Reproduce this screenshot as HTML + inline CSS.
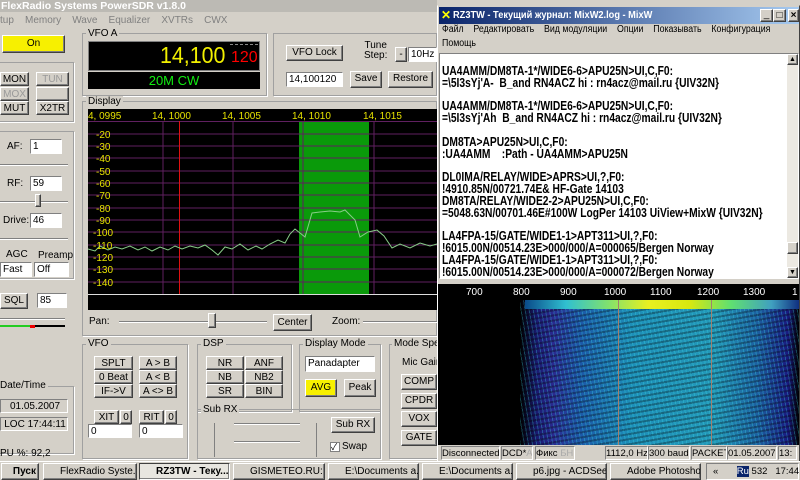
<!DOCTYPE html>
<html><head><meta charset="utf-8"><style>
*{box-sizing:border-box;margin:0;padding:0}
body{width:800px;height:480px;overflow:hidden;background:#d4d0c8;font-family:"Liberation Sans","Noto Sans CJK SC",sans-serif;font-size:10px;color:#000;position:relative;white-space:nowrap}
.a{position:absolute}
.btn{position:absolute;background:#d4d0c8;border:1px solid;border-color:#fff #404040 #404040 #fff;box-shadow:inset -1px -1px #808080;text-align:center;font-size:10px;line-height:13px;overflow:hidden}
.grp{position:absolute;border:1px solid #a0a0a0;box-shadow:1px 1px #fff}
.gl{position:absolute;background:#d4d0c8;padding:0 2px;font-size:10px;line-height:12px}
.inp{position:absolute;background:#fff;border:1px solid;border-color:#808080 #fff #fff #808080;font-size:10px;padding-left:2px;line-height:13px;overflow:hidden}
.txt{font-family:"Liberation Sans",sans-serif;font-weight:bold;font-size:12.5px;line-height:12px;color:#000;transform:scaleX(0.82);transform-origin:0 0}
</style></head><body>
<div class="a" style="left:0;top:0;width:437px;height:12px;background:#bcbab4;color:#fff;font-weight:bold;font-size:10.5px;line-height:12px;padding-left:1px">FlexRadio Systems PowerSDR v1.8.0</div>
<div class="a" style="left:0;top:13px;width:437px;height:15px;color:#808080;font-size:10px;line-height:15px">tup&nbsp;&nbsp;&nbsp;&nbsp;Memory&nbsp;&nbsp;&nbsp;&nbsp;Wave&nbsp;&nbsp;&nbsp;&nbsp;Equalizer&nbsp;&nbsp;&nbsp;&nbsp;XVTRs&nbsp;&nbsp;&nbsp;&nbsp;CWX</div>
<div class="btn" style="left:2px;top:35px;width:63px;height:18px;background:#f7f000;line-height:16px">On</div>
<div class="grp" style="left:-2px;top:62px;width:76px;height:60px"></div>
<div class="btn" style="left:0;top:72px;width:29px;height:14px">MON</div>
<div class="btn" style="left:36px;top:72px;width:33px;height:14px;color:#999">TUN</div>
<div class="btn" style="left:0;top:87px;width:29px;height:14px;color:#999">MOX</div>
<div class="btn" style="left:36px;top:87px;width:33px;height:14px"></div>
<div class="btn" style="left:0;top:101px;width:29px;height:14px">MUT</div>
<div class="btn" style="left:36px;top:101px;width:33px;height:14px">X2TR</div>
<div class="grp" style="left:-2px;top:131px;width:76px;height:148px"></div>
<div class="a" style="left:7px;top:141px">AF:</div><div class="inp" style="left:30px;top:139px;width:32px;height:15px">1</div>
<div class="a" style="left:0;top:164px;width:68px;height:2px;border-top:1px solid #808080;border-bottom:1px solid #fff"></div>
<div class="a" style="left:7px;top:178px">RF:</div><div class="inp" style="left:30px;top:176px;width:32px;height:15px">59</div>
<div class="a" style="left:0;top:201px;width:68px;height:2px;border-top:1px solid #808080;border-bottom:1px solid #fff"></div>
<div class="btn" style="left:35px;top:194px;width:6px;height:13px"></div>
<div class="a" style="left:3px;top:215px">Drive:</div><div class="inp" style="left:30px;top:213px;width:32px;height:15px">46</div>
<div class="a" style="left:0;top:238px;width:68px;height:2px;border-top:1px solid #808080;border-bottom:1px solid #fff"></div>
<div class="a" style="left:6px;top:249px">AGC</div><div class="a" style="left:38px;top:250px">Preamp</div>
<div class="inp" style="left:0;top:262px;width:32px;height:15px">Fast</div>
<div class="inp" style="left:34px;top:262px;width:35px;height:15px">Off</div>
<div class="btn" style="left:0;top:293px;width:28px;height:16px">SQL</div>
<div class="inp" style="left:37px;top:293px;width:30px;height:15px">85</div>
<div class="a" style="left:0;top:318px;width:65px;height:2px;border-top:1px solid #808080;border-bottom:1px solid #fff"></div>
<div class="a" style="left:0;top:325px;width:30px;height:2px;background:#2c2"></div><div class="a" style="left:30px;top:325px;width:5px;height:3px;background:#e00"></div><div class="a" style="left:35px;top:325px;width:30px;height:2px;background:#000"></div>
<div class="grp" style="left:-2px;top:386px;width:76px;height:68px"></div>
<div class="gl" style="left:-2px;top:380px">Date/Time</div>
<div class="inp" style="left:0;top:399px;width:68px;height:14px;background:#d4d0c8;text-align:center">01.05.2007</div>
<div class="inp" style="left:0;top:417px;width:68px;height:14px;background:#d4d0c8;text-align:center">LOC 17:44:11</div>
<div class="a" style="left:0;top:448px">PU %: 92,2</div>

<div class="grp" style="left:82px;top:33px;width:185px;height:63px"></div>
<div class="gl" style="left:86px;top:28px">VFO A</div>
<div class="a" style="left:88px;top:41px;width:172px;height:30px;background:#000;border:1px solid #808080"></div>
<div class="a" style="left:160px;top:41px;font-size:23px;color:#f2f000;line-height:28px;transform:scaleX(0.93);transform-origin:0 0">14,100</div>
<div class="a" style="left:231px;top:48px;font-size:16px;color:#f00;line-height:20px">120</div>
<div class="a" style="left:230px;top:44px;width:28px;height:1px;border-top:1px dashed #888"></div>
<div class="a" style="left:88px;top:72px;width:172px;height:17px;background:#000;color:#1e1;text-align:center;font-size:13px;line-height:17px">20M CW</div>
<div class="grp" style="left:273px;top:33px;width:164px;height:63px"></div>
<div class="btn" style="left:286px;top:45px;width:57px;height:16px">VFO Lock</div>
<div class="a" style="left:364px;top:41px;text-align:center;line-height:10px">Tune<br>Step:</div>
<div class="btn" style="left:395px;top:47px;width:12px;height:15px">-</div>
<div class="inp" style="left:408px;top:47px;width:29px;height:15px">10Hz</div>
<div class="inp" style="left:286px;top:72px;width:57px;height:15px">14,100120</div>
<div class="btn" style="left:350px;top:71px;width:32px;height:17px">Save</div>
<div class="btn" style="left:388px;top:71px;width:45px;height:17px">Restore</div>

<div class="grp" style="left:82px;top:101px;width:355px;height:235px"></div>
<div class="gl" style="left:86px;top:96px">Display</div>
<svg class="a" style="left:88px;top:109px" width="349" height="201" viewBox="88 109 349 201">
<rect x="88" y="109" width="349" height="201" fill="#000"/>
<rect x="299" y="121" width="70" height="173" fill="#0a9a0a"/>
<g stroke="#602060" stroke-width="1">
<line x1="88" y1="121.5" x2="437" y2="121.5"/>
<line x1="88" y1="134" x2="437" y2="134"/><line x1="88" y1="146" x2="437" y2="146"/><line x1="88" y1="158" x2="437" y2="158"/><line x1="88" y1="171" x2="437" y2="171"/><line x1="88" y1="183" x2="437" y2="183"/><line x1="88" y1="195" x2="437" y2="195"/><line x1="88" y1="208" x2="437" y2="208"/><line x1="88" y1="220" x2="437" y2="220"/><line x1="88" y1="232" x2="437" y2="232"/><line x1="88" y1="245" x2="437" y2="245"/><line x1="88" y1="257" x2="437" y2="257"/><line x1="88" y1="269" x2="437" y2="269"/><line x1="88" y1="282" x2="437" y2="282"/>
<line x1="163" y1="121" x2="163" y2="294"/><line x1="233" y1="121" x2="233" y2="294"/><line x1="303" y1="121" x2="303" y2="294"/><line x1="374" y1="121" x2="374" y2="294"/>
</g>
<line x1="179.5" y1="121" x2="179.5" y2="294" stroke="#e01010"/>
<line x1="88" y1="294.5" x2="437" y2="294.5" stroke="#ddd"/>
<polyline fill="none" stroke="#8c8" stroke-width="1" points="88,249 95,251 100,246 108,250 115,247 122,249 130,246 138,250 145,247 152,251 160,247 168,250 175,246 182,249 190,246 198,248 205,245 212,250 218,255 225,247 232,249 240,244 248,250 256,246 262,249 270,244 278,240 285,243 290,234 295,229 300,233 305,237 312,213 320,212 330,211 340,212 345,210 350,215 355,220 360,237 368,232 377,230 384,236 392,248 400,244 410,248 420,243 430,246 437,244"/>
<g fill="#e6e200" font-family="Liberation Sans" font-size="10">
<text x="88" y="119">4, 0995</text><text x="152" y="119">14, 1000</text><text x="222" y="119">14, 1005</text><text x="292" y="119">14, 1010</text><text x="363" y="119">14, 1015</text>
<text x="96" y="138">-20</text><text x="96" y="150">-30</text><text x="96" y="162">-40</text><text x="96" y="175">-50</text><text x="96" y="187">-60</text><text x="96" y="199">-70</text><text x="96" y="212">-80</text><text x="96" y="224">-90</text><text x="93" y="236">-100</text><text x="93" y="249">-110</text><text x="93" y="261">-120</text><text x="93" y="273">-130</text><text x="93" y="286">-140</text>
</g></svg>
<div class="a" style="left:89px;top:316px">Pan:</div>
<div class="a" style="left:119px;top:321px;width:148px;height:2px;border-top:1px solid #808080;border-bottom:1px solid #fff"></div>
<div class="btn" style="left:208px;top:313px;width:8px;height:15px"></div>
<div class="btn" style="left:273px;top:314px;width:39px;height:17px;line-height:15px">Center</div>
<div class="a" style="left:332px;top:316px">Zoom:</div>
<div class="a" style="left:363px;top:321px;width:74px;height:2px;border-top:1px solid #808080;border-bottom:1px solid #fff"></div>

<div class="grp" style="left:82px;top:344px;width:106px;height:115px"></div>
<div class="gl" style="left:86px;top:338px">VFO</div>
<div class="btn" style="left:94px;top:356px;width:39px;height:14px">SPLT</div>
<div class="btn" style="left:139px;top:356px;width:38px;height:14px">A &gt; B</div>
<div class="btn" style="left:94px;top:370px;width:39px;height:14px">0 Beat</div>
<div class="btn" style="left:139px;top:370px;width:38px;height:14px">A &lt; B</div>
<div class="btn" style="left:94px;top:384px;width:39px;height:14px">IF-&gt;V</div>
<div class="btn" style="left:139px;top:384px;width:38px;height:14px">A &lt;&gt; B</div>
<div class="btn" style="left:94px;top:410px;width:25px;height:14px">XIT</div><div class="btn" style="left:120px;top:410px;width:12px;height:14px">0</div>
<div class="btn" style="left:139px;top:410px;width:25px;height:14px">RIT</div><div class="btn" style="left:165px;top:410px;width:12px;height:14px">0</div>
<div class="inp" style="left:88px;top:424px;width:44px;height:14px">0</div>
<div class="inp" style="left:139px;top:424px;width:44px;height:14px">0</div>
<div class="grp" style="left:197px;top:344px;width:95px;height:68px"></div>
<div class="gl" style="left:201px;top:338px">DSP</div>
<div class="btn" style="left:206px;top:356px;width:38px;height:14px">NR</div><div class="btn" style="left:245px;top:356px;width:38px;height:14px">ANF</div>
<div class="btn" style="left:206px;top:370px;width:38px;height:14px">NB</div><div class="btn" style="left:245px;top:370px;width:38px;height:14px">NB2</div>
<div class="btn" style="left:206px;top:384px;width:38px;height:14px">SR</div><div class="btn" style="left:245px;top:384px;width:38px;height:14px">BIN</div>
<div class="grp" style="left:299px;top:344px;width:82px;height:68px"></div>
<div class="gl" style="left:303px;top:338px">Display Mode</div>
<div class="inp" style="left:305px;top:356px;width:70px;height:16px">Panadapter</div>
<div class="btn" style="left:305px;top:379px;width:32px;height:18px;background:#f7f000;line-height:16px">AVG</div>
<div class="btn" style="left:344px;top:379px;width:32px;height:18px;line-height:16px">Peak</div>
<div class="grp" style="left:197px;top:409px;width:184px;height:50px"></div>
<div class="gl" style="left:201px;top:404px">Sub RX</div>
<div class="btn" style="left:331px;top:417px;width:44px;height:16px">Sub RX</div>
<div class="a" style="left:214px;top:423px;width:1px;height:34px;background:#808080"></div>
<div class="a" style="left:316px;top:423px;width:1px;height:34px;background:#808080"></div>
<div class="a" style="left:234px;top:423px;width:66px;height:2px;border-top:1px solid #808080;border-bottom:1px solid #fff"></div>
<div class="a" style="left:234px;top:441px;width:66px;height:2px;border-top:1px solid #808080;border-bottom:1px solid #fff"></div>
<div class="a" style="left:330px;top:442px;width:10px;height:10px;background:#fff;border:1px solid #808080;font-size:9px;line-height:8px">✓</div>
<div class="a" style="left:342px;top:441px">Swap</div>
<div class="grp" style="left:389px;top:344px;width:50px;height:115px"></div>
<div class="gl" style="left:392px;top:338px">Mode Spe</div>
<div class="a" style="left:402px;top:357px">Mic Gain</div>
<div class="btn" style="left:401px;top:374px;width:36px;height:16px">COMP</div>
<div class="btn" style="left:401px;top:393px;width:36px;height:16px">CPDR</div>
<div class="btn" style="left:401px;top:411px;width:36px;height:16px">VOX</div>
<div class="btn" style="left:401px;top:430px;width:36px;height:16px">GATE</div>

<div class="a" style="left:437px;top:5px;width:363px;height:458px;background:#d4d0c8;border:1px solid;border-color:#d4d0c8 #404040 #404040 #fff"></div>
<div class="a" style="left:439px;top:7px;width:360px;height:17px;background:linear-gradient(90deg,#0a246a,#a6caf0);color:#fff;font-weight:bold;font-size:10.5px;line-height:17px;padding-left:14px"><span style="display:inline-block;transform:scaleX(0.88);transform-origin:0 0">RZ3TW - Текущий журнал: MixW2.log - MixW</span></div>
<div class="a" style="left:441px;top:8px;width:14px;height:14px;color:#ff0;font-size:12px;line-height:14px;font-weight:bold">✕</div>
<div class="btn" style="left:760px;top:9px;width:13px;height:13px;line-height:10px">_</div>
<div class="btn" style="left:773px;top:9px;width:13px;height:13px;line-height:11px">□</div>
<div class="btn" style="left:788px;top:9px;width:11px;height:13px;font-weight:bold;line-height:11px">×</div>
<div class="a" style="left:442px;top:23px;font-size:10px;line-height:14px;transform:scaleX(0.88);transform-origin:0 0">Файл&nbsp;&nbsp;&nbsp; Редактировать&nbsp;&nbsp;&nbsp; Вид модуляции&nbsp;&nbsp;&nbsp; Опции&nbsp;&nbsp;&nbsp; Показывать&nbsp;&nbsp;&nbsp; Конфигурация<br>Помощь</div>
<div class="a" style="left:439px;top:53px;width:360px;height:226px;background:#fff;border:1px solid;border-color:#808080 #fff #fff #808080"></div>
<div class="a" style="left:787px;top:54px;width:11px;height:224px;background:#ece9e2"></div>
<div class="btn" style="left:787px;top:54px;width:11px;height:11px;font-size:7px;line-height:9px">▲</div>
<div class="btn" style="left:787px;top:242px;width:11px;height:12px"></div>
<div class="btn" style="left:787px;top:267px;width:11px;height:11px;font-size:7px;line-height:9px">▼</div>
<div class="a txt" style="left:442px;top:65px">UA4AMM/DM8TA-1*/WIDE6-6&gt;APU25N&gt;UI,C,F0:<br>=\5I3sYj'A-&nbsp; B_and RN4ACZ hi : rn4acz@mail.ru {UIV32N}</div>
<div class="a txt" style="left:442px;top:100px">UA4AMM/DM8TA-1*/WIDE6-6&gt;APU25N&gt;UI,C,F0:<br>=\5I3sYj'Ah&nbsp; B_and RN4ACZ hi : rn4acz@mail.ru {UIV32N}</div>
<div class="a txt" style="left:442px;top:136px">DM8TA&gt;APU25N&gt;UI,C,F0:<br>:UA4AMM&nbsp;&nbsp;&nbsp; :Path - UA4AMM&gt;APU25N</div>
<div class="a txt" style="left:442px;top:171px">DL0IMA/RELAY/WIDE&gt;APRS&gt;UI,?,F0:<br>!4910.85N/00721.74E&amp; HF-Gate 14103<br>DM8TA/RELAY/WIDE2-2&gt;APU25N&gt;UI,C,F0:<br>=5048.63N/00701.46E#100W LogPer 14103 UiView+MixW {UIV32N}</div>
<div class="a txt" style="left:442px;top:230px">LA4FPA-15/GATE/WIDE1-1&gt;APT311&gt;UI,?,F0:<br>!6015.00N/00514.23E&gt;000/000/A=000065/Bergen Norway<br>LA4FPA-15/GATE/WIDE1-1&gt;APT311&gt;UI,?,F0:<br>!6015.00N/00514.23E&gt;000/000/A=000072/Bergen Norway</div>
<div class="a" style="left:438px;top:284px;width:361px;height:161px;background:#000"></div>
<div class="a" style="left:520px;top:300px;width:279px;height:145px;background:linear-gradient(90deg,#000 0%,#1a1a70 6%,#2a2a90 12%,#1c5aa8 22%,#1e8fb8 40%,#2498b8 70%,#1c60a0 85%,#1a1a80 96%,#000 100%)"></div>
<div class="a" style="left:520px;top:300px;width:279px;height:145px;background:repeating-linear-gradient(170deg,rgba(0,0,0,.3) 0 2px,transparent 2px 5px),repeating-linear-gradient(80deg,rgba(60,220,230,.3) 0 1px,transparent 1px 4px)"></div>
<div class="a" style="left:525px;top:300px;width:274px;height:9px;background:linear-gradient(90deg,#0a4a8a,#30c0d0 15%,#7ee070 30%,#e8f020 45%,#d8e810 60%,#60e070 75%,#40a0c0 90%,#103080)"></div>
<div class="a" style="left:618px;top:300px;width:1px;height:145px;background:#a08070"></div>
<div class="a" style="left:711px;top:300px;width:1px;height:145px;background:#a08070"></div>
<div class="a" style="left:438px;top:287px;width:361px;color:#fff;font-size:10px;line-height:11px">
<span class="a" style="left:28px">700</span><span class="a" style="left:75px">800</span><span class="a" style="left:122px">900</span><span class="a" style="left:166px">1000</span><span class="a" style="left:212px">1100</span><span class="a" style="left:259px">1200</span><span class="a" style="left:305px">1300</span><span class="a" style="left:354px">1</span></div>
<div class="a" style="left:439px;top:446px;width:360px;height:15px;font-size:9.5px;line-height:13px">
<span class="a" style="left:2px;width:59px;height:14px;border:1px solid;border-color:#808080 #fff #fff #808080;overflow:hidden">Disconnected</span>
<span class="a" style="left:62px;width:32px;height:14px;border:1px solid;border-color:#808080 #fff #fff #808080;overflow:hidden">DCD*<span style="color:#aaa">АПЧ</span></span>
<span class="a" style="left:96px;width:40px;height:14px;border:1px solid;border-color:#808080 #fff #fff #808080;overflow:hidden">Фикс <span style="color:#aaa">БН</span></span>
<span class="a" style="left:166px;width:43px;height:14px;border:1px solid;border-color:#808080 #fff #fff #808080;overflow:hidden">1112,0 Hz</span>
<span class="a" style="left:209px;width:42px;height:14px;border:1px solid;border-color:#808080 #fff #fff #808080;overflow:hidden">300 baud</span>
<span class="a" style="left:252px;width:36px;height:14px;border:1px solid;border-color:#808080 #fff #fff #808080;overflow:hidden">PACKET</span>
<span class="a" style="left:288px;width:50px;height:14px;border:1px solid;border-color:#808080 #fff #fff #808080;overflow:hidden">01.05.2007</span>
<span class="a" style="left:339px;width:19px;height:14px;border:1px solid;border-color:#808080 #fff #fff #808080;overflow:hidden">13:</span></div>

<div class="a" style="left:0;top:461px;width:800px;height:19px;background:#d4d0c8;border-top:1px solid #fff;font-size:9.5px;line-height:15px">
<div class="btn" style="left:1px;top:1px;width:38px;height:17px;font-weight:bold;line-height:15px;text-align:right;padding-right:2px">Пуск</div>
<div class="btn" style="left:43px;top:1px;width:94px;height:17px;text-align:left;padding-left:16px;line-height:15px">FlexRadio Syste...</div>
<div class="btn" style="left:139px;top:1px;width:91px;height:17px;text-align:left;padding-left:16px;line-height:15px;background:#e8e6e0;border-color:#404040 #fff #fff #404040;font-weight:bold">RZ3TW - Теку...</div>
<div class="btn" style="left:233px;top:1px;width:92px;height:17px;text-align:left;padding-left:16px;line-height:15px">GISMETEO.RU: п...</div>
<div class="btn" style="left:328px;top:1px;width:91px;height:17px;text-align:left;padding-left:16px;line-height:15px">E:\Documents a...</div>
<div class="btn" style="left:422px;top:1px;width:91px;height:17px;text-align:left;padding-left:16px;line-height:15px">E:\Documents a...</div>
<div class="btn" style="left:516px;top:1px;width:91px;height:17px;text-align:left;padding-left:16px;line-height:15px">p6.jpg - ACDSee...</div>
<div class="btn" style="left:610px;top:1px;width:91px;height:17px;text-align:left;padding-left:16px;line-height:15px">Adobe Photosho...</div>
<div class="a" style="left:706px;top:1px;width:93px;height:17px;border:1px solid;border-color:#808080 #fff #fff #808080;padding-left:6px">«&nbsp;&nbsp;&nbsp;&nbsp;&nbsp;&nbsp;&nbsp;<span style="background:#0a246a;color:#fff">Ru</span> 532&nbsp;&nbsp; 17:44</div>
</div>
</body></html>
